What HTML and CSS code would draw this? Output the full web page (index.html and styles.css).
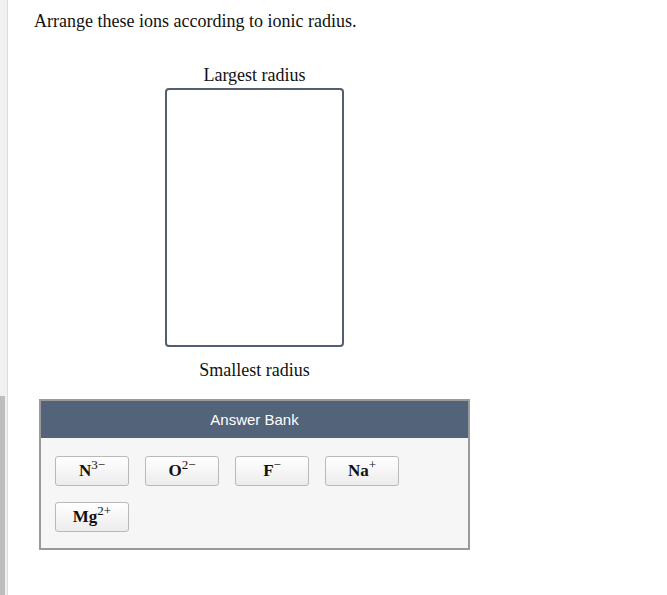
FILE: index.html
```html
<!DOCTYPE html>
<html lang="en">
<head>
  <meta charset="UTF-8" />
  <title>Ionic Radius</title>
  <link rel="stylesheet" href="styles.css">
</head>
<body>
  <div class="page">
    <!-- thin rail on the left edge -->
    <div class="rail">
      <div class="rail-top"></div>
      <div class="rail-thumb"></div>
    </div>

    <main class="content">
      <p class="prompt">Arrange these ions according to ionic radius.</p>

      <div class="ranking">
        <div class="rank-label">Largest radius</div>
        <div class="drop-box"></div>
        <div class="rank-label bottom">Smallest radius</div>

        <div class="bank">
          <div class="bank-header">Answer Bank</div>
          <div class="bank-body">
            <div class="chip">N<sup>3&minus;</sup></div>
            <div class="chip">O<sup>2&minus;</sup></div>
            <div class="chip">F<sup>&minus;</sup></div>
            <div class="chip">Na<sup>+</sup></div>
            <div class="chip">Mg<sup>2+</sup></div>
          </div>
        </div>
      </div>
    </main>
  </div>
</body>
</html>
```

FILE: styles.css
```css
:root {
  --slate: #53637a;
  --rail: #f0f0f0;
  --chip-border: #b9b9b9;
}

* {
  box-sizing: border-box;
}

body {
  margin: 0;
  background: #fff;
  color: #111;
  font-family: 'Liberation Serif', 'Times New Roman', serif;
}

.page {
  display: flex;
  min-height: 595px;
}

.rail {
  width: 8px;
  display: flex;
  flex-direction: column;
  background: var(--rail);
  border-right: 1px solid #dcdcdc;
}

.rail-top {
  height: 396px;
}

.rail-thumb {
  flex: 1;
  width: 5px;
  background: #bdbdbd;
}

.content {
  flex: 1;
  padding: 10px 0 0 26px;
}

.prompt {
  margin: 0;
  font-size: 18px;
  line-height: 22px;
}

.ranking {
  width: 431px;
  margin: 0 0 0 5px;
  display: flex;
  flex-direction: column;
  align-items: center;
}

.rank-label {
  margin-top: 32px;
  font-size: 18px;
  line-height: 22px;
}

.rank-label.bottom {
  margin-top: 12px;
}

.drop-box {
  width: 179px;
  height: 259px;
  margin-top: 2px;
  border: 2px solid #525f6e;
  border-radius: 4px;
  background: #fff;
}

.bank {
  width: 100%;
  margin-top: 18px;
  border: 2px solid #9a9a9a;
  background: #f6f6f6;
}

.bank-header {
  height: 37px;
  background: var(--slate);
  color: #fff;
  font-family: 'Liberation Sans', Arial, sans-serif;
  font-size: 15px;
  line-height: 37px;
  text-align: center;
}

.bank-body {
  display: flex;
  flex-wrap: wrap;
  gap: 16px;
  padding: 18px 14px 16px;
}

.chip {
  width: 74px;
  height: 30px;
  border: 1px solid var(--chip-border);
  border-radius: 3px;
  background: linear-gradient(#ffffff, #ececec);
  font-size: 17px;
  font-weight: bold;
  line-height: 28px;
  text-align: center;
}

.chip sup {
  font-size: 13px;
  font-weight: normal;
  line-height: 0;
  vertical-align: 7px;
}
```
